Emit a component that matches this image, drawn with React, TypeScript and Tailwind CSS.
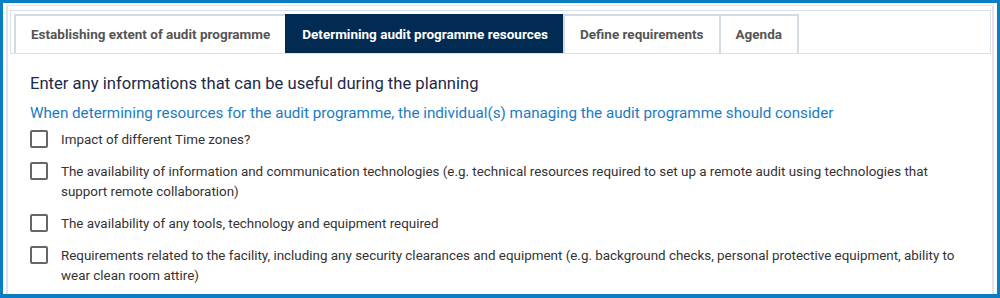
import React from "react";

const tabs = [
  { label: "Establishing extent of audit programme", active: false },
  { label: "Determining audit programme resources", active: true },
  { label: "Define requirements", active: false },
  { label: "Agenda", active: false },
];

const items = [
  "Impact of different Time zones?",
  "The availability of information and communication technologies (e.g. technical resources required to set up a remote audit using technologies that support remote collaboration)",
  "The availability of any tools, technology and equipment required",
  "Requirements related to the facility, including any security clearances and equipment (e.g. background checks, personal protective equipment, ability to wear clean room attire)",
];

export default function App() {
  return (
    <div
      className="w-[1000px] h-[298px] overflow-hidden bg-white border-[#0b7dc2] border-t-[3px] border-x-[3px] border-b-4 pt-[2px] px-[3px] box-border"
      style={{ fontFamily: "Roboto, 'Noto Sans', sans-serif" }}
    >
      <div className="h-full border-l-2 border-t border-r-2 border-[#dfe5ec] box-border">
        <div className="mt-[4px] ml-[2px] mr-[1px] border border-[#d9e0e8] pt-[3px] pl-[3px] flex">
          {tabs.map((t, i) => (
            <div
              key={i}
              className={
                "h-[39px] flex items-center px-[15px] text-[13.5px] font-bold border-t-2 border-l-2 " +
                (i === tabs.length - 1 ? "border-r-2 " : "") +
                (t.active
                  ? "bg-[#012b53] text-white border-[#012b53]"
                  : "bg-white text-[#555555] border-[#d3dbe3]")
              }
            >
              {t.label}
            </div>
          ))}
        </div>
        <div className="pl-[22px] pr-[26px] pt-[18px]">
          <div className="text-[16.6px] leading-6 text-[#1b2a48]">
            Enter any informations that can be useful during the planning
          </div>
          <div className="text-[15.2px] leading-6 text-[#1b7bc3] mt-[5px]">
            When determining resources for the audit programme, the individual(s) managing the audit programme should consider
          </div>
          <div className="mt-[5px] flex flex-col gap-3">
            {items.map((it, i) => (
              <div key={i} className="flex items-start">
                <div className="w-[18px] h-[18px] border-2 border-[#666666] rounded-[2px] shrink-0" />
                <div className="ml-[13px] text-[13.4px] leading-5 text-[#333333]">{it}</div>
              </div>
            ))}
          </div>
        </div>
      </div>
    </div>
  );
}
